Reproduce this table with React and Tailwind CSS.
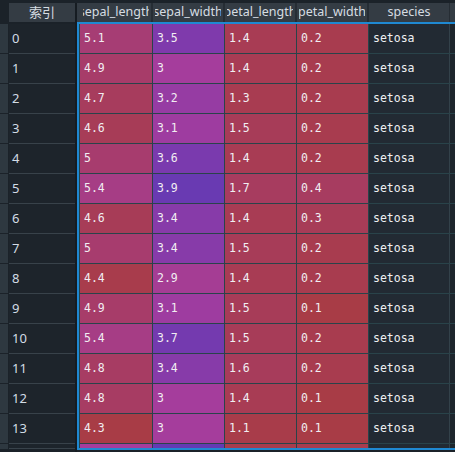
import React from 'react';

const data = [
    [5.1, 3.5, 1.4, 0.2],
    [4.9, 3.0, 1.4, 0.2],
    [4.7, 3.2, 1.3, 0.2],
    [4.6, 3.1, 1.5, 0.2],
    [5.0, 3.6, 1.4, 0.2],
    [5.4, 3.9, 1.7, 0.4],
    [4.6, 3.4, 1.4, 0.3],
    [5.0, 3.4, 1.5, 0.2],
    [4.4, 2.9, 1.4, 0.2],
    [4.9, 3.1, 1.5, 0.1],
    [5.4, 3.7, 1.5, 0.2],
    [4.8, 3.4, 1.6, 0.2],
    [4.8, 3.0, 1.4, 0.1],
    [4.3, 3.0, 1.1, 0.1],
    [5.8, 4.0, 1.2, 0.2],
];

// min / max per column over the whole iris set
const ranges = [[4.3, 7.9], [2.0, 4.4], [1.0, 6.9], [0.1, 2.5]];

const stops = [
    [0, [168, 60, 70]],
    [0.42, [165, 61, 157]],
    [0.62, [128, 58, 172]],
    [0.8, [104, 58, 178]],
    [1, [80, 58, 186]],
];

const heat = (v, [lo, hi]) => {
    const t = Math.min(1, Math.max(0, (v - lo) / (hi - lo)));
    for (let i = 1; i < stops.length; i++) {
        const [t1, c1] = stops[i];
        const [t0, c0] = stops[i - 1];
        if (t <= t1) {
            const k = (t - t0) / (t1 - t0);
            const c = c0.map((x, j) => Math.round(x + (c1[j] - x) * k));
            return `rgb(${c[0]}, ${c[1]}, ${c[2]})`;
        }
    }
    return 'rgb(80, 58, 186)';
};

const headers = ['sepal_length', 'sepal_width', 'petal_length', 'petal_width'];

const sans = { fontFamily: '"Noto Sans", "Noto Sans CJK SC", sans-serif' };
const mono = { fontFamily: '"DejaVu Sans Mono", monospace' };

const App = () => {
    return (
        <div className="w-[455px] h-[452px] bg-[#1b2229] overflow-hidden flex" style={sans}>
            {/* Index column */}
            <div className="w-[77px] flex flex-col shrink-0 overflow-hidden">
                <div className="h-[3px] shrink-0" />
                <div className="h-[19px] flex shrink-0">
                    <div className="w-[9px]" />
                    <div className="w-[66px] bg-[#343c44] flex items-center justify-center text-[13px] text-[#d6dce2]">
                        索引
                    </div>
                    <div className="w-[2px] bg-[#161c22]" />
                </div>
                <div className="h-[2px] flex shrink-0">
                    <div className="w-[75px]" />
                    <div className="w-[2px] bg-[#161c22]" />
                </div>
                {data.slice(0, 14).map((_, i) => (
                    <div key={i} className="h-[30px] flex shrink-0">
                        <div className="w-[8px] bg-[#2e3840] mb-[1px]" />
                        <div className="w-[1px]" />
                        <div className="w-[66px] bg-[#1d242b] border-b border-[#38424a] flex items-center pl-[3px] text-[13px] text-[#d3dce5]">
                            {i}
                        </div>
                        <div className="w-[2px] bg-[#161c22]" />
                    </div>
                ))}
                <div className="h-[5px] flex shrink-0">
                    <div className="w-[8px] bg-[#2e3840]" />
                    <div className="w-[1px]" />
                    <div className="w-[66px] bg-[#1d242b] border-b border-[#38424a]" />
                    <div className="w-[2px] bg-[#161c22]" />
                </div>
                <div className="flex-1 flex">
                    <div className="w-[75px]" />
                    <div className="w-[2px] bg-[#161c22]" />
                </div>
            </div>

            {/* Data table */}
            <div className="flex-1 flex flex-col">
                <div className="h-[3px] shrink-0" />
                <div className="h-[19px] shrink-0 flex bg-[#343c44] text-[12.5px] text-[#d6dce2]">
                    {headers.map((h, j) => (
                        <div
                            key={h}
                            className={`${j === 0 ? 'w-[76px] pl-[6px]' : 'w-[72px] pl-[2px]'} shrink-0 pr-[2px] border-r-2 border-[#262d34] flex`}
                        >
                            <div className="flex-1 flex items-center justify-center overflow-hidden whitespace-nowrap">
                                {h}
                            </div>
                        </div>
                    ))}
                    <div className="w-[81px] shrink-0 border-r border-[#262d34] flex items-center justify-center">
                        species
                    </div>
                    <div className="flex-1" />
                </div>

                <div className="h-[428px] shrink-0 border-l-2 border-t-2 border-b-2 border-[#1f89d2] overflow-hidden">
                    {data.map((row, i) => (
                        <div key={i} className="h-[30px] flex border-b border-[#29434a] shrink-0" style={mono}>
                            <div className="w-[1px] bg-[#29434a]" />
                            {row.map((v, j) => (
                                <div
                                    key={j}
                                    className={`${j === 0 ? 'w-[73px]' : 'w-[72px]'} shrink-0 border-r border-[#29434a] flex items-center pl-[4px] text-[11.5px] text-[#f1eef2]`}
                                    style={{ backgroundColor: heat(v, ranges[j]) }}
                                >
                                    {String(v)}
                                </div>
                            ))}
                            <div className="w-[81px] shrink-0 bg-[#222a33] border-r border-[#33414a] flex items-center pl-[4px] text-[11.5px] text-[#eef0f2]">
                                setosa
                            </div>
                            <div className="flex-1 bg-[#1e262d]" />
                        </div>
                    ))}
                </div>
            </div>
        </div>
    );
};

export default App;
